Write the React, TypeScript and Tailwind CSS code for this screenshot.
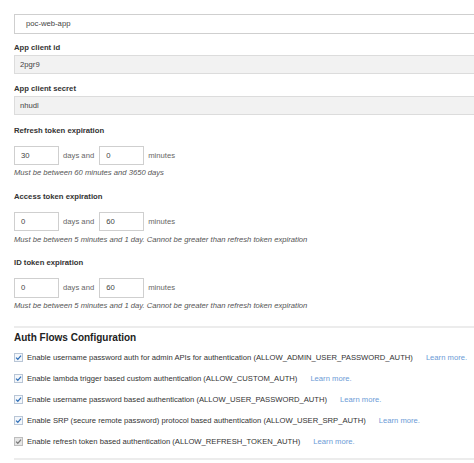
import React from 'react'

const font = { fontFamily: '"Liberation Sans", Arial, sans-serif' }

function Label({ children, className = '' }: { children: React.ReactNode; className?: string }) {
  return (
    <div className={`h-[10px] text-[7.7px] leading-[10px] font-bold text-[#333] ${className}`}>{children}</div>
  )
}

function Hint({ children, className = '' }: { children: React.ReactNode; className?: string }) {
  return <div className={`h-[10px] text-[7.65px] leading-[10px] italic text-[#555] ${className}`}>{children}</div>
}

function Expiration({ days, minutes, tall }: { days: string; minutes: string; tall?: boolean }) {
  const box = `${tall ? 'h-[20px]' : 'h-[19px]'} w-[45px] border border-[#cfcfcf] bg-white pl-[6px] flex items-center text-[7.7px] text-[#444]`
  return (
    <div className="mt-[10px] flex items-center">
      <div className={box}>{days}</div>
      <span className="ml-[4px] text-[7.7px] text-[#666]">days and</span>
      <div className={`${box} ml-[5px]`}>{minutes}</div>
      <span className="ml-[4px] text-[7.7px] text-[#666]">minutes</span>
    </div>
  )
}

function Check({ disabled }: { disabled?: boolean }) {
  return (
    <div
      className={`h-[9px] w-[9px] shrink-0 border flex items-center justify-center ${
        disabled ? 'border-[#bdbdbd] bg-[#e6e6e6]' : 'border-[#b9c6d6] bg-[#f4f7fb]'
      }`}
    >
      <svg width="7" height="7" viewBox="0 0 10 10">
        <path
          d="M1.5 5.2 L4 7.6 L8.6 2.2"
          fill="none"
          stroke={disabled ? '#777' : '#2f6fb8'}
          strokeWidth="1.8"
        />
      </svg>
    </div>
  )
}

const flows = [
  { text: 'Enable username password auth for admin APIs for authentication (ALLOW_ADMIN_USER_PASSWORD_AUTH)' },
  { text: 'Enable lambda trigger based custom authentication (ALLOW_CUSTOM_AUTH)' },
  { text: 'Enable username password based authentication (ALLOW_USER_PASSWORD_AUTH)' },
  { text: 'Enable SRP (secure remote password) protocol based authentication (ALLOW_USER_SRP_AUTH)' },
  { text: 'Enable refresh token based authentication (ALLOW_REFRESH_TOKEN_AUTH)', disabled: true }
]

export default function App() {
  return (
    <div className="h-[463px] w-[474px] overflow-hidden bg-white pl-[14px] pt-[14px]" style={font}>
      <div className="h-[20px] w-[520px] border border-[#cfcfcf] bg-white pl-[11px] flex items-center text-[7.7px] text-[#444]">
        poc-web-app
      </div>

      <Label className="mt-[9px]">App client id</Label>
      <div className="mt-[2px] h-[19px] w-[520px] border border-[#dcdcdc] bg-[#f2f2f2] pl-[5px] flex items-center text-[7.7px] text-[#444]">
        2pgr9
      </div>

      <Label className="mt-[10px]">App client secret</Label>
      <div className="mt-[2px] h-[19px] w-[520px] border border-[#dcdcdc] bg-[#f2f2f2] pl-[5px] flex items-center text-[7.7px] text-[#444]">
        nhudl
      </div>

      <Label className="mt-[11px]">Refresh token expiration</Label>
      <Expiration days="30" minutes="0" />
      <Hint className="mt-[3px]">Must be between 60 minutes and 3650 days</Hint>

      <Label className="mt-[14px]">Access token expiration</Label>
      <Expiration days="0" minutes="60" />
      <Hint className="mt-[4px]">Must be between 5 minutes and 1 day. Cannot be greater than refresh token expiration</Hint>

      <Label className="mt-[13px]">ID token expiration</Label>
      <Expiration days="0" minutes="60" tall />
      <Hint className="mt-[3px]">Must be between 5 minutes and 1 day. Cannot be greater than refresh token expiration</Hint>

      <div className="mt-[15px] h-[2px] w-[520px] bg-[#ececec]" />

      <div className="mt-[4px] h-[12px] text-[10px] leading-[12px] font-bold text-[#222]">Auth Flows Configuration</div>

      <div className="mt-[3px]">
        {flows.map((f) => (
          <div key={f.text} className="flex h-[21px] items-center">
            <Check disabled={f.disabled} />
            <span className="ml-[4px] whitespace-nowrap text-[7.65px] text-[#333]">{f.text}</span>
            <span className="ml-[13px] whitespace-nowrap text-[7.65px] text-[#6b9bd6]">Learn more.</span>
          </div>
        ))}
      </div>

      <div className="mt-[6px] h-[2px] w-[520px] bg-[#ececec]" />
    </div>
  )
}
